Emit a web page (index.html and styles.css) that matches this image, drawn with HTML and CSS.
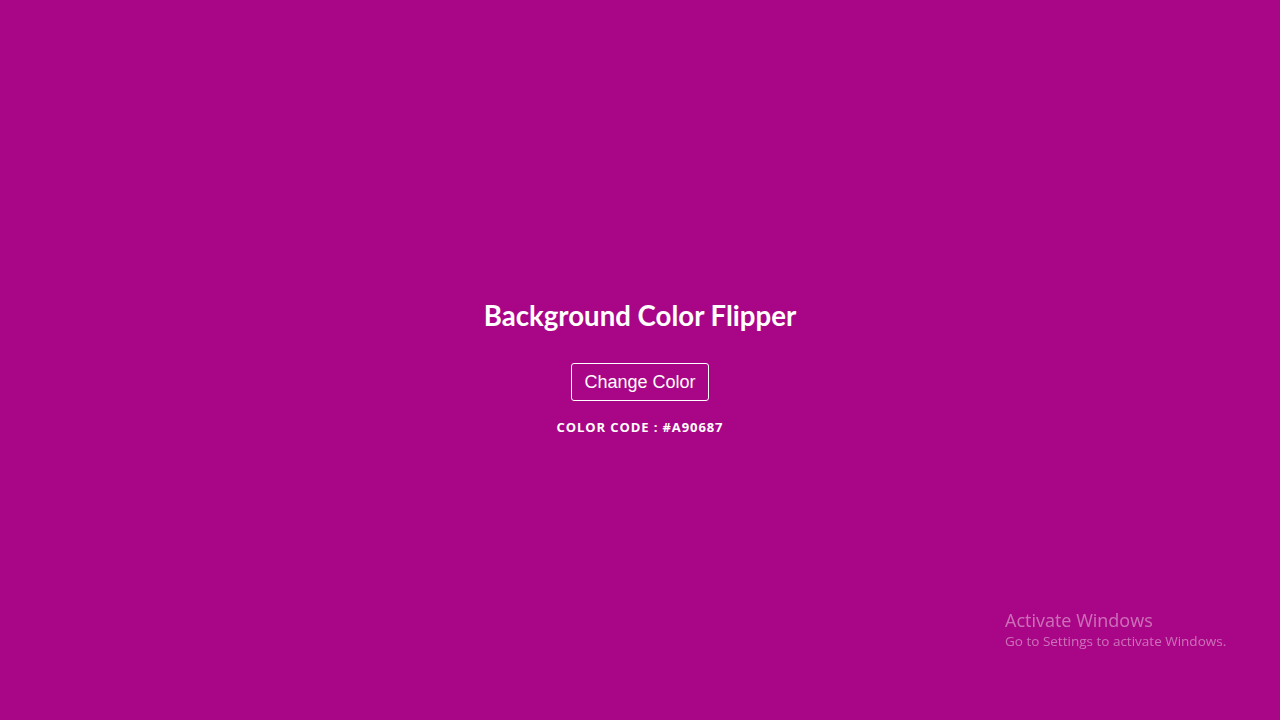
FILE: index.html
```html
<!DOCTYPE html>
<html lang="en">
<head>
<meta charset="utf-8">
<title>Background Color Flipper</title>
<link rel="stylesheet" href="styles.css">
</head>
<body class="page">
  <main class="flipper">
    <h1 class="flipper-title">Background Color Flipper</h1>
    <button class="flipper-btn" type="button">Change Color</button>
    <p class="flipper-code">COLOR CODE : #A90687</p>
  </main>
  <div class="activation">
    <div class="activation-title">Activate Windows</div>
    <div class="activation-text">Go to Settings to activate Windows.</div>
  </div>
</body>
</html>
```
FILE: styles.css
```css
html, body {
  margin: 0;
  height: 100%;
}

.page {
  background: #a90687;
  color: #fff;
  font-family: "Open Sans", "Noto Sans", sans-serif;
  overflow: hidden;
}

.flipper {
  height: 100%;
  display: flex;
  flex-direction: column;
  align-items: center;
  justify-content: center;
  padding-top: 13px;
  box-sizing: border-box;
}

.flipper-title {
  margin: 0;
  font-family: "Lato", "Open Sans", sans-serif;
  font-size: 27.6px;
  font-weight: 700;
  line-height: 36px;
}

.flipper-btn {
  margin-top: 29px;
  background: transparent;
  color: #fff;
  border: 1px solid #fff;
  border-radius: 3px;
  font-family: "Liberation Sans", Arial, sans-serif;
  font-size: 18px;
  line-height: 20px;
  padding: 8px 12px;
  cursor: pointer;
}

.flipper-code {
  margin: 18px 0 0;
  font-family: "Open Sans", sans-serif;
  font-size: 13px;
  font-weight: 700;
  letter-spacing: 0.9px;
  line-height: 16px;
}

.activation {
  position: fixed;
  left: 1005px;
  top: 608px;
  color: rgba(255, 255, 255, 0.42);
  font-family: "Open Sans", "Noto Sans", sans-serif;
}

.activation-title {
  font-size: 18px;
  line-height: 24px;
}

.activation-text {
  font-size: 13.5px;
  line-height: 18px;
}
```
